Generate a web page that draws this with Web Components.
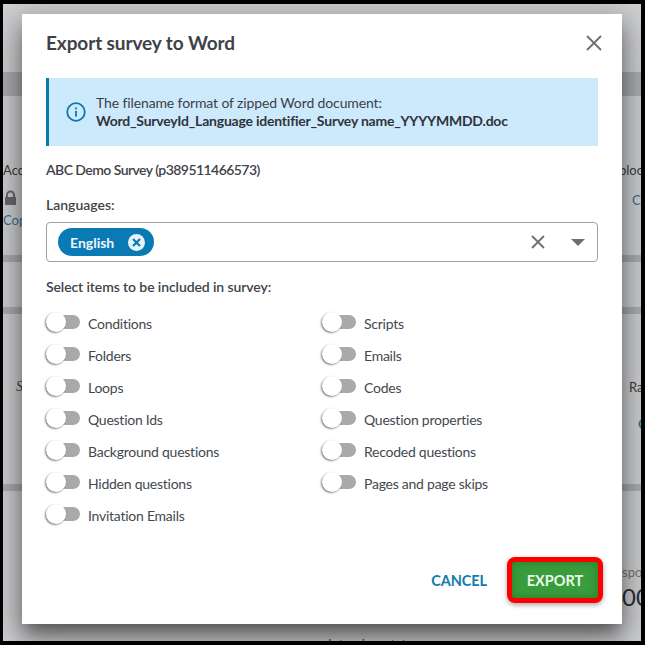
<!DOCTYPE html>
<html>
<head>
<meta charset="utf-8">
<title>Export survey to Word</title>
<style>
  html, body { margin: 0; padding: 0; width: 645px; height: 645px; overflow: hidden; background: #fff; }
  body { font-family: "Lato", "Noto Sans", sans-serif; }
</style>
</head>
<body>
<export-screen>
  <backdrop-page slot="behind"></backdrop-page>
  <export-dialog heading="Export survey to Word">
    <info-note>
      The filename format of zipped Word document:
      <b slot="strong">Word_SurveyId_Language identifier_Survey name_YYYYMMDD.doc</b>
    </info-note>
    <p class="survey">ABC Demo Survey (p389511466573)</p>
    <language-select label="Languages:" value="English"></language-select>
    <item-list heading="Select items to be included in survey:">
      <item-toggle>Conditions</item-toggle>
      <item-toggle>Scripts</item-toggle>
      <item-toggle>Folders</item-toggle>
      <item-toggle>Emails</item-toggle>
      <item-toggle>Loops</item-toggle>
      <item-toggle>Codes</item-toggle>
      <item-toggle>Question Ids</item-toggle>
      <item-toggle>Question properties</item-toggle>
      <item-toggle>Background questions</item-toggle>
      <item-toggle>Recoded questions</item-toggle>
      <item-toggle>Hidden questions</item-toggle>
      <item-toggle>Pages and page skips</item-toggle>
      <item-toggle>Invitation Emails</item-toggle>
    </item-list>
  </export-dialog>
</export-screen>

<script>
const FONT = '"Lato", "Noto Sans", sans-serif';

class ExportScreen extends HTMLElement {
  connectedCallback() {
    this.attachShadow({ mode: 'open' }).innerHTML = `
      <style>
        :host { display: block; position: relative; width: 645px; height: 645px; box-sizing: border-box;
          border: 4px solid #000; border-left-width: 3px; overflow: hidden; font-family: ${FONT}; }
        .center { position: absolute; inset: 0; display: flex; justify-content: flex-start; align-items: flex-start; padding: 10px 0 0 19px; box-sizing: border-box; }
        .behind { position: absolute; inset: 0; }
      </style>
      <div class="behind"><slot name="behind"></slot></div>
      <div class="center"><slot></slot></div>`;
  }
}

// the page greyed out behind the modal, only its edges show
class BackdropPage extends HTMLElement {
  connectedCallback() {
    this.attachShadow({ mode: 'open' }).innerHTML = `
      <style>
        :host { display: block; position: relative; width: 100%; height: 100%; background: #d2d3d5; color: #3c3f44; font-size: 13px; overflow: hidden; }
        .bar { position: absolute; left: 0; right: 0; background: #aeb0b4; }
        .t { position: absolute; white-space: nowrap; }
        .link { color: #35739a; }
      </style>
      <div class="bar" style="top:68px;height:24px"></div>
      <div class="bar" style="top:251px;height:7px"></div>
      <div class="bar" style="top:303px;height:7px"></div>
      <div class="bar" style="top:480px;height:7px"></div>
      <span class="t" style="left:0;top:158px">Acc</span>
      <svg class="t" style="left:1px;top:186px" width="13" height="16" viewBox="0 0 13 16"><path fill="#6a6c70" d="M2 7V5a4.500 4.500 0 0 1 9 0v2h1v8H1V7zm2 0h5V5a2.500 2.500 0 0 0-5 0z"/></svg>
      <span class="t link" style="left:0;top:208px">Cop</span>
      <span class="t" style="left:13px;top:375px;font-family:'Liberation Serif',serif;font-style:italic;font-size:14px">S</span>
      <span class="t" style="left:616px;top:158px">bloc</span>
      <span class="t link" style="left:629px;top:188px">C</span>
      <span class="t" style="left:626px;top:375px">Ra</span>
      <span class="t link" style="left:635px;top:412px;font-weight:700">C</span>
      <span class="t" style="left:619px;top:560px;color:#777">spo</span>
      <span class="t" style="left:619px;top:578px;font-size:24px;color:#2d3138">00</span>
      <span class="t" style="left:325px;top:632px;color:#444">Interview status</span>
    `;
  }
}

class ExportDialog extends HTMLElement {
  connectedCallback() {
    this.attachShadow({ mode: 'open' }).innerHTML = `
      <style>
        :host { display: flex; flex-direction: column; box-sizing: border-box; width: 600px; height: 610px; background: #fff; flex: none;
          box-shadow: 0 11px 15px -4px rgba(0,0,0,.4), 0 20px 34px 3px rgba(0,0,0,.2), 0 6px 30px 8px rgba(0,0,0,.2); color: #3a3f47; position: relative; }
        header { display: flex; align-items: center; justify-content: space-between; height: 64px; padding: 0 20px 6px 24px; box-sizing: border-box; }
        h2 { margin: 0 0 2px; font-size: 19px; font-weight: 700; letter-spacing: -.1px; color: #3d4249; }
        .body { flex: 1; display: flex; flex-direction: column; padding: 0 24px; }
        .body ::slotted(.survey) { margin: 15px 0 0; height: 18px; line-height: 18px; font-size: 14px; font-weight: 600; letter-spacing: -.55px; color: #3f4349; }
        footer { display: flex; justify-content: flex-end; align-items: center; gap: 20px; padding: 0 19px 21px 0; }
        .cancel { font-size: 14.500px; font-weight: 700; color: #127cac; letter-spacing: -.1px; }
        .export { box-sizing: border-box; width: 96px; height: 46px; display: flex; align-items: center; justify-content: center;
          background: #389d3c; border: 5px solid #f00; border-radius: 8px; color: #ecf7ea; font-size: 14.500px; font-weight: 700;
          box-shadow: 0 2px 5px rgba(0,0,0,.35), inset 0 0 8px rgba(0,60,0,.3); }
        svg { display: block; }
      </style>
      <header>
        <h2>${this.getAttribute('heading')}</h2>
        <svg width="16" height="16" viewBox="0 0 16 16"><path d="M1 1l14 14M15 1L1 15" stroke="#6d6f73" stroke-width="1.800" fill="none"/></svg>
      </header>
      <div class="body"><slot></slot></div>
      <footer><span class="cancel">CANCEL</span><span class="export">EXPORT</span></footer>`;
  }
}

class InfoNote extends HTMLElement {
  connectedCallback() {
    this.attachShadow({ mode: 'open' }).innerHTML = `
      <style>
        :host { display: flex; align-items: center; box-sizing: border-box; height: 68px; background: #cdeafd; border-left: 3px solid #0b79ac; padding-left: 17px; font-size: 14px; line-height: 18px; color: #3a3f47; }
        .txt { margin-left: 10px; letter-spacing: -.12px; }
        ::slotted(b) { display: block; font-weight: 700; color: #30343a; letter-spacing: -.22px; }
        svg { flex: none; }
      </style>
      <svg width="20" height="20" viewBox="0 0 20 20">
        <circle cx="10" cy="10" r="8.800" fill="none" stroke="#0b79ac" stroke-width="1.800"/>
        <rect x="9.100" y="8.800" width="1.800" height="5.800" fill="#0b79ac"/>
        <rect x="9.100" y="5.400" width="1.800" height="1.900" fill="#0b79ac"/>
      </svg>
      <div class="txt"><slot></slot><slot name="strong"></slot></div>`;
  }
}

class LanguageSelect extends HTMLElement {
  connectedCallback() {
    this.attachShadow({ mode: 'open' }).innerHTML = `
      <style>
        :host { display: block; margin-top: 17px; }
        label { display: block; font-size: 14px; font-weight: 600; line-height: 18px; color: #3f4349; }
        .box { box-sizing: border-box; height: 40px; margin-top: 8px; border: 1px solid #a0a0a0; border-radius: 4px; display: flex; align-items: center; padding: 0 12px 0 11px; }
        .chip { box-sizing: border-box; width: 96px; height: 28px; border-radius: 14px; background: #0a7ab5; color: #eef7fc; font-size: 14px; font-weight: 700; display: flex; align-items: center; justify-content: space-between; padding: 1px 9px 0 12px; }
        .clear { margin-left: auto; margin-right: 26px; }
        svg { display: block; }
      </style>
      <label>${this.getAttribute('label')}</label>
      <div class="box">
        <span class="chip">${this.getAttribute('value')}
          <svg width="17" height="17" viewBox="0 0 17 17"><circle cx="8.500" cy="8.500" r="8.500" fill="#e8f4fb"/><path d="M5 5l7 7M12 5l-7 7" stroke="#0a7ab5" stroke-width="2.200"/></svg>
        </span>
        <svg class="clear" width="14" height="14" viewBox="0 0 14 14"><path d="M1 1l12 12M13 1L1 13" stroke="#6d6f73" stroke-width="1.800" fill="none"/></svg>
        <svg width="14" height="7" viewBox="0 0 14 7"><path d="M0 0h14L7 7z" fill="#6d6f73"/></svg>
      </div>`;
  }
}

class ItemList extends HTMLElement {
  connectedCallback() {
    this.attachShadow({ mode: 'open' }).innerHTML = `
      <style>
        :host { display: block; margin-top: 16px; }
        h3 { margin: 0; font-size: 14px; font-weight: 600; line-height: 18px; letter-spacing: -.1px; color: #3f4349; }
        .grid { display: grid; grid-template-columns: 276px 1fr; grid-auto-rows: 32px; margin-top: 11px; }
      </style>
      <h3>${this.getAttribute('heading')}</h3>
      <div class="grid"><slot></slot></div>`;
  }
}

class ItemToggle extends HTMLElement {
  connectedCallback() {
    this.attachShadow({ mode: 'open' }).innerHTML = `
      <style>
        :host { display: flex; align-items: center; gap: 8px; font-size: 14px; letter-spacing: -.25px; color: #44484e; }
        .sw { position: relative; width: 34px; height: 20px; flex: none; top: -1px; }
        .track { position: absolute; left: 6px; right: 0; top: 3px; height: 14px; border-radius: 7px; background: #a9a9a9; }
        .knob { position: absolute; left: 0; top: 0; width: 20px; height: 20px; border-radius: 50%; background: #fff; box-shadow: -1px 1px 2px rgba(0,0,0,.5); }
      </style>
      <span class="sw"><span class="track"></span><span class="knob"></span></span>
      <slot></slot>`;
  }
}

customElements.define('export-screen', ExportScreen);
customElements.define('backdrop-page', BackdropPage);
customElements.define('export-dialog', ExportDialog);
customElements.define('info-note', InfoNote);
customElements.define('language-select', LanguageSelect);
customElements.define('item-list', ItemList);
customElements.define('item-toggle', ItemToggle);
</script>
</body>
</html>
